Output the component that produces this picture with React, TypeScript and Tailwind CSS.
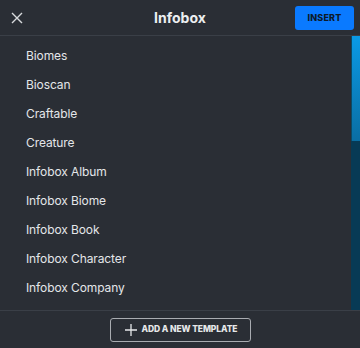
import React from "react";

const items = [
  "Biomes",
  "Bioscan",
  "Craftable",
  "Creature",
  "Infobox Album",
  "Infobox Biome",
  "Infobox Book",
  "Infobox Character",
  "Infobox Company",
];

export default function App() {
  return (
    <div
      className="w-[360px] h-[348px] bg-[#2a2e35] flex flex-col overflow-hidden text-[#e8eaed]"
      style={{ fontFamily: "Inter, 'Noto Sans', sans-serif" }}
    >
      <div className="h-[36px] shrink-0 flex items-center justify-between pl-[11px] pr-[6px] border-b border-[#3a3f47] relative">
        <svg width="12" height="12" viewBox="0 0 12 12" className="text-[#d8dadd]">
          <path d="M1.5 1.5 L10.5 10.5 M10.5 1.5 L1.5 10.5" stroke="currentColor" strokeWidth="1.4" strokeLinecap="square" />
        </svg>
        <div className="absolute left-0 right-0 text-center pointer-events-none text-[14px] font-bold text-[#eceef0]">
          Infobox
        </div>
        <button className="h-[24px] w-[59px] rounded-[3px] bg-[#0a7aff] text-[9px] font-extrabold tracking-[0.2px] text-[#0d1b2a]">
          INSERT
        </button>
      </div>
      <div className="flex-1 flex min-h-0">
        <div className="flex-1 pt-[5px] overflow-hidden">
          {items.map((t) => (
            <div key={t} className="h-[29px] flex items-center pl-[26px] text-[12px] tracking-[-0.1px] text-[#e4e6e9]">
              {t}
            </div>
          ))}
        </div>
        <div className="w-[9px] bg-[#073a55] flex flex-col">
          <div className="h-[105px] bg-gradient-to-b from-[#0a9ae6] to-[#0a6ea3] border-l border-[#0b4a66]" />
        </div>
      </div>
      <div className="h-[38px] shrink-0 border-t border-[#3a3f47] flex items-center justify-center">
        <button className="h-[24px] w-[141px] rounded-[3px] border border-[#a9acb1] flex items-center justify-center gap-[5px] pl-[2px] text-[8.5px] font-extrabold tracking-[-0.1px] text-[#e6e8ea]">
          <svg width="12" height="12" viewBox="0 0 12 12">
            <path d="M6 0 V12 M0 6 H12" stroke="currentColor" strokeWidth="1.3" />
          </svg>
          ADD A NEW TEMPLATE
        </button>
      </div>
    </div>
  );
}
